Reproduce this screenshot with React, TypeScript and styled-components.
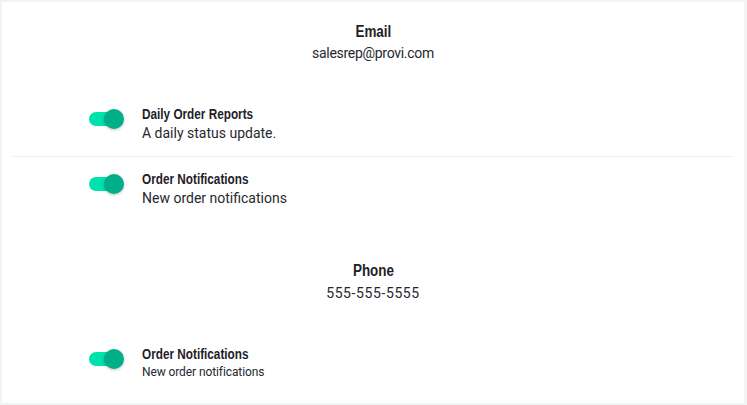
import React from "react";
import styled, { createGlobalStyle } from "styled-components";

const Global = createGlobalStyle`
  html, body { margin: 0; padding: 0; background: #f1f4f3; }
  body { font-family: Roboto, "Liberation Sans", sans-serif; color: #1e2227; }
`;

const Card = styled.div`
  margin: 2px 3px 2px 2px;
  height: 401px;
  background: #ffffff;
  box-sizing: border-box;
  display: flex;
  flex-direction: column;
  gap: 20px;
`;

const Section = styled.section`
  display: flex;
  flex-direction: column;
  padding-top: 20px;
`;

const Header = styled.div`
  display: flex;
  flex-direction: column;
  align-items: center;
  margin-bottom: 29px;
`;

const HeaderTitle = styled.div`
  font-family: "Liberation Sans", Arial, sans-serif;
  font-weight: 700;
  font-size: 16px;
  line-height: 20px;
  transform: scaleX(0.84);
  transform-origin: center;
`;

const HeaderValue = styled.div<{ $gap: number; $spacing: number }>`
  font-family: Roboto, sans-serif;
  font-size: 14px;
  line-height: 20px;
  margin-top: ${(p) => p.$gap}px;
  letter-spacing: ${(p) => p.$spacing}px;
  color: #25292e;
`;

const Row = styled.div<{ $divider?: boolean }>`
  display: flex;
  align-items: flex-start;
  gap: 18px;
  margin: 0 10px;
  padding: 13px 0 13px 77px;
  border-bottom: ${(p) => (p.$divider ? "1px solid #eef2f1" : "none")};
`;

const Toggle = styled.div`
  position: relative;
  width: 35px;
  height: 20px;
  margin-top: 4px;
  flex-shrink: 0;
`;

const Track = styled.div`
  position: absolute;
  left: 0;
  top: 3px;
  width: 28px;
  height: 14px;
  border-radius: 7px;
  background: #00e2ad;
`;

const Knob = styled.div`
  position: absolute;
  left: 15px;
  top: 0;
  width: 20px;
  height: 20px;
  border-radius: 50%;
  background: #00ae89;
  box-shadow: 0 1px 3px rgba(0, 0, 0, 0.25);
`;

const Texts = styled.div`
  display: flex;
  flex-direction: column;
  align-items: flex-start;
`;

const RowTitle = styled.div`
  font-family: "Liberation Sans", Arial, sans-serif;
  font-weight: 700;
  font-size: 14px;
  line-height: 18px;
  transform: scaleX(0.84);
  transform-origin: left center;
  white-space: nowrap;
`;

const RowDesc = styled.div<{ $small?: boolean }>`
  font-family: Roboto, sans-serif;
  font-size: ${(p) => (p.$small ? 12 : 14)}px;
  line-height: ${(p) => (p.$small ? 18 : 20)}px;
  letter-spacing: ${(p) => (p.$small ? -0.1 : 0)}px;
  color: #25292e;
`;

const Setting = ({
  title,
  desc,
  small,
  divider,
}: {
  title: string;
  desc: string;
  small?: boolean;
  divider?: boolean;
}) => (
  <Row $divider={divider}>
    <Toggle>
      <Track />
      <Knob />
    </Toggle>
    <Texts>
      <RowTitle>{title}</RowTitle>
      <RowDesc $small={small}>{desc}</RowDesc>
    </Texts>
  </Row>
);

export default function App() {
  return (
    <>
      <Global />
      <Card>
        <Section>
          <Header>
            <HeaderTitle>Email</HeaderTitle>
            <HeaderValue $gap={1} $spacing={-0.3}>salesrep@provi.com</HeaderValue>
          </Header>
          <Setting title="Daily Order Reports" desc="A daily status update." divider />
          <Setting title="Order Notifications" desc="New order notifications" />
        </Section>
        <Section>
          <Header>
            <HeaderTitle>Phone</HeaderTitle>
            <HeaderValue $gap={2} $spacing={0.6}>555-555-5555</HeaderValue>
          </Header>
          <Setting title="Order Notifications" desc="New order notifications" small />
        </Section>
      </Card>
    </>
  );
}
